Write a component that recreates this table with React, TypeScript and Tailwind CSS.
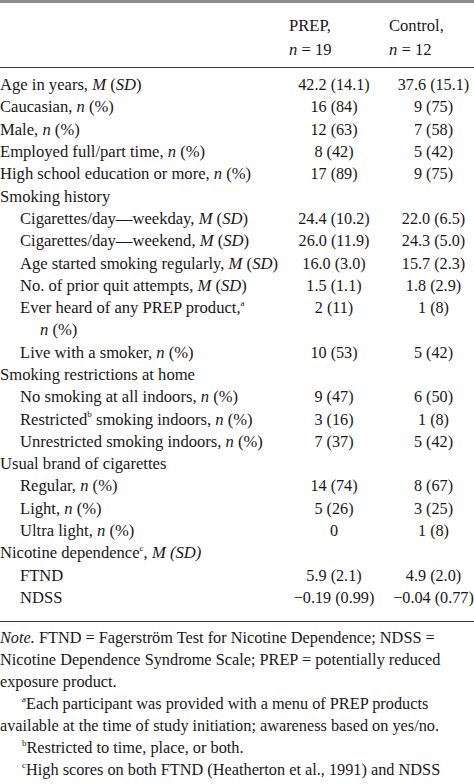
import type { ReactNode } from "react";

const I = ({ children }: { children: ReactNode }) => <span className="italic">{children}</span>;
const Sup = ({ children }: { children: ReactNode }) => (
  <sup className="relative -top-[1px] text-[9px] align-super leading-none">{children}</sup>
);

const MSD = (
  <>
    <I>M</I> (<I>SD</I>)
  </>
);
const NPct = (
  <>
    <I>n</I> (%)
  </>
);

type Row = {
  label: ReactNode;
  indent?: 0 | 1 | 2;
  prep?: string;
  control?: string;
};

const rows: Row[] = [
  { label: <>Age in years, {MSD}</>, prep: "42.2 (14.1)", control: "37.6 (15.1)" },
  { label: <>Caucasian, {NPct}</>, prep: "16 (84)", control: "9 (75)" },
  { label: <>Male, {NPct}</>, prep: "12 (63)", control: "7 (58)" },
  { label: <>Employed full/part time, {NPct}</>, prep: "8 (42)", control: "5 (42)" },
  { label: <>High school education or more, {NPct}</>, prep: "17 (89)", control: "9 (75)" },
  { label: "Smoking history" },
  { label: <>Cigarettes/day—weekday, {MSD}</>, indent: 1, prep: "24.4 (10.2)", control: "22.0 (6.5)" },
  { label: <>Cigarettes/day—weekend, {MSD}</>, indent: 1, prep: "26.0 (11.9)", control: "24.3 (5.0)" },
  { label: <>Age started smoking regularly, {MSD}</>, indent: 1, prep: "16.0 (3.0)", control: "15.7 (2.3)" },
  { label: <>No. of prior quit attempts, {MSD}</>, indent: 1, prep: "1.5 (1.1)", control: "1.8 (2.9)" },
  {
    label: (
      <>
        Ever heard of any PREP product,<Sup>a</Sup>
      </>
    ),
    indent: 1,
    prep: "2 (11)",
    control: "1 (8)",
  },
  { label: NPct, indent: 2 },
  { label: <>Live with a smoker, {NPct}</>, indent: 1, prep: "10 (53)", control: "5 (42)" },
  { label: "Smoking restrictions at home" },
  { label: <>No smoking at all indoors, {NPct}</>, indent: 1, prep: "9 (47)", control: "6 (50)" },
  {
    label: (
      <>
        Restricted<Sup>b</Sup> smoking indoors, {NPct}
      </>
    ),
    indent: 1,
    prep: "3 (16)",
    control: "1 (8)",
  },
  { label: <>Unrestricted smoking indoors, {NPct}</>, indent: 1, prep: "7 (37)", control: "5 (42)" },
  { label: "Usual brand of cigarettes" },
  { label: <>Regular, {NPct}</>, indent: 1, prep: "14 (74)", control: "8 (67)" },
  { label: <>Light, {NPct}</>, indent: 1, prep: "5 (26)", control: "3 (25)" },
  { label: <>Ultra light, {NPct}</>, indent: 1, prep: "0", control: "1 (8)" },
  {
    label: (
      <>
        Nicotine dependence<Sup>c</Sup>, <I>M (SD)</I>
      </>
    ),
  },
  { label: "FTND", indent: 1, prep: "5.9 (2.1)", control: "4.9 (2.0)" },
  { label: "NDSS", indent: 1, prep: "−0.19 (0.99)", control: "−0.04 (0.77)" },
];

const indentClass = ["pl-0", "pl-[20px]", "pl-[40px]"];

function TableRow({ row }: { row: Row }) {
  return (
    <div className="flex h-[22.3px] items-center whitespace-nowrap leading-[22px]">
      <div className={`w-[289px] shrink-0 ${indentClass[row.indent ?? 0]}`}>{row.label}</div>
      <div className="flex w-[90px] shrink-0 justify-center text-[16.2px]">{row.prep}</div>
      <div className="ml-[10px] flex w-[85px] shrink-0 justify-center pl-[4px] text-[16.2px]">
        {row.control}
      </div>
    </div>
  );
}

export default function App() {
  return (
    <div className="h-[784px] w-[474px] overflow-hidden bg-white font-['Liberation_Serif',serif] text-[16.6px] text-[#1a1718]">
      <div className="h-[3px] bg-[#8c8c8c]" />

      {/* column heads */}
      <div className="flex h-[65px] items-end border-b border-[#3a3a3a] pb-[5px] leading-[24px]">
        <div className="w-[289px] shrink-0" />
        <div className="w-[90px] shrink-0">
          <div>PREP,</div>
          <div>
            <I>n</I> = 19
          </div>
        </div>
        <div className="ml-[10px] w-[85px] shrink-0">
          <div>Control,</div>
          <div>
            <I>n</I> = 12
          </div>
        </div>
      </div>

      <div className="pt-[6px]">
        {rows.map((row, i) => (
          <TableRow key={i} row={row} />
        ))}
      </div>

      <div className="mt-[12px] border-t border-[#3a3a3a] pt-[5px] text-[16.3px] leading-[22px] whitespace-nowrap">
        <div>
          <I>Note.</I> FTND = Fagerström Test for Nicotine Dependence; NDSS =
        </div>
        <div>Nicotine Dependence Syndrome Scale; PREP = potentially reduced</div>
        <div>exposure product.</div>
        <div className="pl-[22px]">
          <Sup>a</Sup>Each participant was provided with a menu of PREP products
        </div>
        <div>available at the time of study initiation; awareness based on yes/no.</div>
        <div className="pl-[22px]">
          <Sup>b</Sup>Restricted to time, place, or both.
        </div>
        <div className="pl-[22px]">
          <Sup>c</Sup>High scores on both FTND (Heatherton et al., 1991) and NDSS
        </div>
      </div>
    </div>
  );
}
